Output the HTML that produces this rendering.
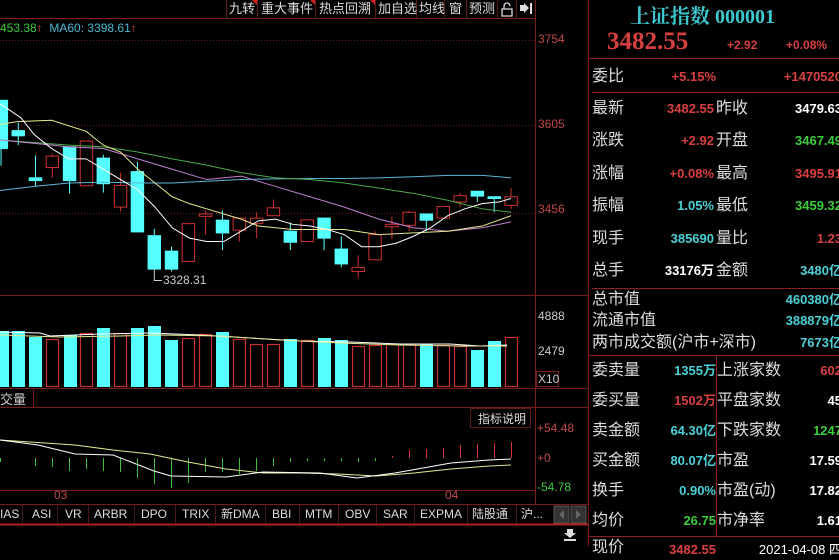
<!DOCTYPE html>
<html><head><meta charset="utf-8"><style>
*{margin:0;padding:0;box-sizing:border-box}
html,body{width:839px;height:546px}
body{background:#000;overflow:hidden;position:relative;font-family:"Liberation Sans","Noto Sans CJK SC",sans-serif;color:#ccc}
.a{position:absolute;white-space:nowrap}
.lb{font-size:16px;color:#ddd;line-height:20px}
.v{font-size:13px;font-weight:bold;line-height:20px;text-align:right}
.r{color:#d84040}.g{color:#3ccc3c}.c{color:#4cd0d8}.w{color:#fff}
.tb{font-size:13px;color:#ddd;top:1px;line-height:16px}
.tab{font-size:12px;color:#ddd;top:506px;line-height:17px}
.ax{font-size:12px;color:#c04848}
</style></head><body>
<svg class="a" style="left:0;top:0" width="839" height="546">
 <line x1="0" y1="18.5" x2="535" y2="18.5" stroke="#7a1a1a"/>
 <line x1="535.5" y1="0" x2="535.5" y2="505" stroke="#7a1a1a"/>
 <line x1="0" y1="295.5" x2="588" y2="295.5" stroke="#7a1a1a"/>
 <line x1="0" y1="388.5" x2="588" y2="388.5" stroke="#7a1a1a"/>
 <line x1="0" y1="407.5" x2="588" y2="407.5" stroke="#7a1a1a"/>
 <line x1="0" y1="490.5" x2="535" y2="490.5" stroke="#7a1a1a"/>
 <line x1="0" y1="504.5" x2="588" y2="504.5" stroke="#7a1a1a"/>
 <line x1="0" y1="524.5" x2="588" y2="524.5" stroke="#b02020" stroke-width="2"/>
 <line x1="33.5" y1="388" x2="33.5" y2="407" stroke="#7a1a1a"/>
 <line x1="588.5" y1="0" x2="588.5" y2="546" stroke="#7a1a1a"/>
 <line x1="0" y1="125.5" x2="535" y2="125.5" stroke="#6a2020" stroke-dasharray="1,2"/>
 <line x1="0" y1="213.5" x2="535" y2="213.5" stroke="#6a2020" stroke-dasharray="1,2"/>
 <line x1="0" y1="40.5" x2="535" y2="40.5" stroke="#6a2020" stroke-dasharray="1,2"/>
 <g transform="translate(0,90) scale(0.3444)" stroke-width="3">
  <g fill="#55ffff" stroke="#55ffff">
   <line x1="3" y1="30" x2="3" y2="220"/><rect x="-15" y="30" width="37" height="140"/>
   <line x1="53" y1="95" x2="53" y2="160"/><rect x="35" y="118" width="36" height="15"/>
   <line x1="103" y1="190" x2="103" y2="280"/><rect x="85" y="255" width="36" height="8"/>
   <line x1="202" y1="165" x2="202" y2="300"/><rect x="184" y="165" width="36" height="98"/>
   <line x1="300" y1="188" x2="300" y2="298"/><rect x="282" y="198" width="36" height="74"/>
   <line x1="399" y1="208" x2="399" y2="412"/><rect x="381" y="237" width="36" height="175"/>
   <line x1="448" y1="403" x2="448" y2="520"/><rect x="430" y="423" width="36" height="97"/>
   <line x1="498" y1="455" x2="498" y2="527"/><rect x="480" y="468" width="36" height="52"/>
   <line x1="646" y1="350" x2="646" y2="465"/><rect x="628" y="378" width="36" height="37"/>
   <line x1="843" y1="385" x2="843" y2="465"/><rect x="825" y="410" width="36" height="32"/>
   <line x1="941" y1="372" x2="941" y2="465"/><rect x="923" y="372" width="36" height="58"/>
   <line x1="991" y1="425" x2="991" y2="515"/><rect x="973" y="462" width="36" height="43"/>
   <line x1="1238" y1="360" x2="1238" y2="410"/><rect x="1220" y="360" width="36" height="18"/>
   <line x1="1386" y1="294" x2="1386" y2="325"/><rect x="1368" y="294" width="36" height="14"/>
   <line x1="1435" y1="310" x2="1435" y2="355"/><rect x="1417" y="310" width="36" height="5"/>
  </g>
  <g fill="#000" stroke="#c83030">
   <line x1="152" y1="185" x2="152" y2="255"/><rect x="134" y="192" width="36" height="33"/>
   <rect x="233" y="148" width="36" height="130"/>
   <line x1="350" y1="240" x2="350" y2="352"/><rect x="332" y="277" width="36" height="63"/>
   <rect x="529" y="388" width="36" height="110"/>
   <line x1="597" y1="350" x2="597" y2="420"/><rect x="579" y="360" width="36" height="7"/>
   <line x1="695" y1="372" x2="695" y2="440"/><rect x="677" y="372" width="36" height="35"/>
   <line x1="745" y1="355" x2="745" y2="430"/><rect x="727" y="372" width="36" height="16"/>
   <line x1="794" y1="318" x2="794" y2="342"/><rect x="776" y="342" width="36" height="23"/>
   <rect x="874" y="377" width="36" height="63"/>
   <line x1="1040" y1="480" x2="1040" y2="545"/><rect x="1022" y="515" width="36" height="12"/>
   <line x1="1089" y1="410" x2="1089" y2="420"/><rect x="1071" y="420" width="36" height="73"/>
   <line x1="1138" y1="368" x2="1138" y2="432"/><rect x="1120" y="390" width="36" height="7"/>
   <line x1="1188" y1="350" x2="1188" y2="410"/><rect x="1170" y="355" width="36" height="38"/>
   <rect x="1269" y="338" width="36" height="34"/>
   <line x1="1336" y1="298" x2="1336" y2="340"/><rect x="1318" y="307" width="36" height="18"/>
   <line x1="1484" y1="285" x2="1484" y2="345"/><rect x="1466" y="310" width="36" height="25"/>
  </g>
  <g fill="none" stroke-width="1">
   <polyline vector-effect="non-scaling-stroke" stroke="#5cb8d8" points="0,292 100,280 200,270 300,268 400,270 500,270 600,265 700,260 800,258 900,257 1000,257 1100,255 1200,252 1300,248 1400,248 1484,255"/>
   <polyline vector-effect="non-scaling-stroke" stroke="#4caa4c" points="0,145 200,160 300,165 400,180 500,200 600,218 700,240 800,255 900,260 1000,270 1100,285 1200,300 1300,320 1400,345 1484,355"/>
   <polyline vector-effect="non-scaling-stroke" stroke="#c080d0" points="0,145 100,155 200,165 300,170 400,200 500,230 600,260 700,250 800,280 900,310 1000,340 1100,375 1200,400 1300,410 1400,400 1484,383"/>
   <polyline vector-effect="non-scaling-stroke" stroke="#e8e890" points="0,100 50,92 150,88 250,120 300,160 350,180 400,230 450,270 500,310 550,330 600,345 650,360 700,375 750,395 800,400 850,405 1000,405 1100,420 1200,415 1300,410 1400,395 1484,365"/>
   <polyline vector-effect="non-scaling-stroke" stroke="#fff" points="0,40 60,80 100,130 150,170 200,200 250,200 300,230 350,260 400,290 450,340 500,400 550,430 600,440 650,440 700,410 750,380 800,375 850,390 900,395 950,405 1000,420 1050,455 1100,455 1150,445 1200,425 1250,400 1300,365 1350,345 1400,330 1450,325 1484,315"/>
   <polyline vector-effect="non-scaling-stroke" stroke="#ccc" points="448,520 448,553 470,553"/>
  </g>
 </g>
 <g stroke-width="1.2">
  <g fill="#55ffff">
   <rect x="0" y="331" width="9" height="56"/><rect x="12" y="331" width="13" height="56"/><rect x="29" y="337" width="13" height="50"/>
   <rect x="64" y="335" width="13" height="52"/><rect x="97" y="328" width="13" height="59"/><rect x="131" y="328" width="13" height="59"/>
   <rect x="148" y="326" width="13" height="61"/><rect x="165" y="340" width="13" height="47"/><rect x="216" y="332" width="13" height="55"/>
   <rect x="284" y="339" width="13" height="48"/><rect x="318" y="338" width="13" height="49"/><rect x="335" y="340" width="13" height="47"/>
   <rect x="420" y="344" width="13" height="43"/><rect x="471" y="350" width="13" height="37"/><rect x="488" y="341" width="13" height="46"/>
  </g>
  <g fill="none" stroke="#c83030">
   <rect x="46.5" y="339.5" width="12" height="47"/><rect x="80.5" y="333.5" width="12" height="53"/><rect x="114.5" y="333.5" width="12" height="53"/>
   <rect x="182.5" y="338.5" width="12" height="48"/><rect x="199.5" y="334.5" width="12" height="52"/><rect x="233.5" y="339.5" width="12" height="47"/>
   <rect x="250.5" y="344.5" width="12" height="42"/><rect x="267.5" y="344.5" width="12" height="42"/><rect x="301.5" y="340.5" width="12" height="46"/>
   <rect x="352.5" y="346.5" width="12" height="40"/><rect x="369.5" y="345.5" width="12" height="41"/><rect x="386.5" y="344.5" width="12" height="42"/>
   <rect x="403.5" y="344.5" width="12" height="42"/><rect x="437.5" y="345.5" width="12" height="41"/><rect x="454.5" y="346.5" width="12" height="40"/>
   <rect x="505.5" y="337.5" width="12" height="49"/>
  </g>
  <polyline fill="none" stroke="#fff" stroke-width="1" points="0,332 40,333 50,336 100,334 150,333 200,335 250,338 300,341 350,342 400,344 450,344 480,346 507,345"/>
  <polyline fill="none" stroke="#e8e890" stroke-width="1" points="0,335 60,337 120,336 160,335 220,336 280,340 340,343 400,345 460,346 507,346"/>
 </g>
 <g stroke-width="1">
  <g stroke="#3cbb3c">
   <line x1="0.5" y1="458" x2="0.5" y2="462"/><line x1="35.5" y1="458" x2="35.5" y2="466"/><line x1="52.5" y1="458" x2="52.5" y2="467"/><line x1="69.5" y1="458" x2="69.5" y2="471"/><line x1="86.5" y1="458" x2="86.5" y2="469"/><line x1="103.5" y1="458" x2="103.5" y2="471"/><line x1="120.5" y1="458" x2="120.5" y2="472"/><line x1="137.5" y1="458" x2="137.5" y2="478"/><line x1="154.5" y1="458" x2="154.5" y2="484"/><line x1="171.5" y1="458" x2="171.5" y2="488"/><line x1="188.5" y1="458" x2="188.5" y2="483"/><line x1="205.5" y1="458" x2="205.5" y2="472"/><line x1="222.5" y1="458" x2="222.5" y2="472"/><line x1="239.5" y1="458" x2="239.5" y2="474"/><line x1="256.5" y1="458" x2="256.5" y2="471"/><line x1="273.5" y1="458" x2="273.5" y2="466"/><line x1="290.5" y1="458" x2="290.5" y2="462"/><line x1="307.5" y1="458" x2="307.5" y2="461"/><line x1="324.5" y1="458" x2="324.5" y2="461"/><line x1="341.5" y1="458" x2="341.5" y2="461"/><line x1="358.5" y1="458" x2="358.5" y2="462"/><line x1="375.5" y1="458" x2="375.5" y2="461"/>
  </g>
  <g stroke="#d83030">
   <line x1="392.5" y1="458" x2="392.5" y2="456"/><line x1="409.5" y1="458" x2="409.5" y2="450"/><line x1="426.5" y1="458" x2="426.5" y2="449"/><line x1="443.5" y1="458" x2="443.5" y2="448"/><line x1="460.5" y1="458" x2="460.5" y2="445"/><line x1="477.5" y1="458" x2="477.5" y2="444"/><line x1="494.5" y1="458" x2="494.5" y2="443"/><line x1="511.5" y1="458" x2="511.5" y2="442"/>
  </g>
  <polyline fill="none" stroke="#e8e890" points="0,440 75,445 113,450 150,454 188,462 226,469 263,473 301,473 338,474 376,476 414,473 451,469 489,466 511,465"/>
  <polyline fill="none" stroke="#fff" points="0,440 38,445 75,454 113,455 154,471 171,476 226,477 263,472 320,473 357,478 395,473 451,463 489,460 511,459"/>
 </g>
 <g stroke="#4a1a1a">
  <line x1="22.5" y1="505" x2="22.5" y2="524"/><line x1="57.5" y1="505" x2="57.5" y2="524"/><line x1="88.5" y1="505" x2="88.5" y2="524"/><line x1="134.5" y1="505" x2="134.5" y2="524"/><line x1="175.5" y1="505" x2="175.5" y2="524"/><line x1="215.5" y1="505" x2="215.5" y2="524"/><line x1="265.5" y1="505" x2="265.5" y2="524"/><line x1="299.5" y1="505" x2="299.5" y2="524"/><line x1="338.5" y1="505" x2="338.5" y2="524"/><line x1="376.5" y1="505" x2="376.5" y2="524"/><line x1="414.5" y1="505" x2="414.5" y2="524"/><line x1="467.5" y1="505" x2="467.5" y2="524"/><line x1="516.5" y1="505" x2="516.5" y2="524"/>
 </g>
 <rect x="554" y="506" width="15" height="17" fill="#333" stroke="#555"/>
 <rect x="571" y="506" width="15" height="17" fill="#333" stroke="#555"/>
 <path d="M564,510 L559,514.5 L564,519Z" fill="#666"/><path d="M576,510 L581,514.5 L576,519Z" fill="#666"/>
 <path d="M567,529 h6 v4 h3 l-6,5 l-6,-5 h3z M564,539 h12 v2 h-12z" fill="#ddd"/>
 <line x1="588" y1="58.5" x2="839" y2="58.5" stroke="#8a2020"/>
 <line x1="592" y1="92.5" x2="839" y2="92.5" stroke="#8a2020"/>
 <line x1="592" y1="288.5" x2="839" y2="288.5" stroke="#8a2020"/>
 <line x1="588" y1="355.5" x2="839" y2="355.5" stroke="#8a2020"/>
 <line x1="716.5" y1="355" x2="716.5" y2="536" stroke="#8a2020"/>
 <line x1="588" y1="536.5" x2="839" y2="536.5" stroke="#8a2020"/>
 <g stroke="#5a1a1a"><line x1="226.5" y1="0" x2="226.5" y2="18"/><line x1="257.5" y1="0" x2="257.5" y2="18"/><line x1="315.5" y1="0" x2="315.5" y2="18"/><line x1="375.5" y1="0" x2="375.5" y2="18"/><line x1="416.5" y1="0" x2="416.5" y2="18"/><line x1="444.5" y1="0" x2="444.5" y2="18"/><line x1="466.5" y1="0" x2="466.5" y2="18"/><line x1="497.5" y1="0" x2="497.5" y2="18"/><line x1="516.5" y1="0" x2="516.5" y2="18"/></g>
 <path d="M252,0 h5 v5z M310,0 h5 v5z M370,0 h5 v5z" fill="#d02020"/>
 <path d="M502,9 h10 v7 h-10z M504,9 v-3 a3,3 0 0 1 6,0" fill="none" stroke="#ddd" stroke-width="1.3"/>
 <path d="M520,5 h4 v-2 l5,5 l-5,5 v-2 h-4z M530,3 h2 v11 h-2z" fill="#ddd"/>
 <rect x="470.5" y="408.5" width="60" height="19" fill="none" stroke="#5a1a1a"/>
 <rect x="536.5" y="371.5" width="22" height="15" fill="none" stroke="#7a1a1a"/>
</svg>

<div class="a tb" style="left:229px">九转</div>
<div class="a tb" style="left:261px">重大事件</div>
<div class="a tb" style="left:319px">热点回溯</div>
<div class="a tb" style="left:378px">加自选</div>
<div class="a tb" style="left:419px">均线</div>
<div class="a tb" style="left:449px">窗</div>
<div class="a tb" style="left:469px">预测</div>

<div class="a" style="left:0;top:21px;font-size:12px"><span style="color:#3ccc3c">453.38</span><span class="r">↑</span> <span style="color:#4cb8d0">&nbsp;MA60: 3398.61</span><span class="r">↑</span></div>
<div class="a ax" style="left:538px;top:32px">3754</div>
<div class="a ax" style="left:538px;top:117px">3605</div>
<div class="a ax" style="left:538px;top:202px">3456</div>
<div class="a" style="left:163px;top:273px;font-size:12px;color:#ccc">3328.31</div>
<div class="a" style="left:538px;top:309px;font-size:12px;color:#ccc">4888</div>
<div class="a" style="left:538px;top:344px;font-size:12px;color:#ccc">2479</div>
<div class="a" style="left:538px;top:372px;font-size:12px;color:#ccc">X10</div>
<div class="a" style="left:0;top:389px;font-size:13px;color:#ccc">交量</div>
<div class="a" style="left:478px;top:410px;font-size:12px;color:#ddd">指标说明</div>
<div class="a ax" style="left:537px;top:421px">+54.48</div>
<div class="a ax" style="left:537px;top:451px">+0</div>
<div class="a" style="left:537px;top:480px;font-size:12px;color:#3ccc3c">-54.78</div>
<div class="a ax" style="left:54px;top:488px">03</div>
<div class="a ax" style="left:445px;top:488px">04</div>

<div class="a tab" style="left:0">IAS</div>
<div class="a tab" style="left:32px">ASI</div>
<div class="a tab" style="left:65px">VR</div>
<div class="a tab" style="left:94px">ARBR</div>
<div class="a tab" style="left:141px">DPO</div>
<div class="a tab" style="left:182px">TRIX</div>
<div class="a tab" style="left:221px">新DMA</div>
<div class="a tab" style="left:272px">BBI</div>
<div class="a tab" style="left:305px">MTM</div>
<div class="a tab" style="left:345px">OBV</div>
<div class="a tab" style="left:383px">SAR</div>
<div class="a tab" style="left:420px">EXPMA</div>
<div class="a tab" style="left:472px">陆股通</div>
<div class="a tab" style="left:521px">沪...</div>

<div class="a" style="left:630px;top:0px;font-size:20px;color:#3cc8d0;font-family:'Liberation Serif','Noto Serif CJK SC',serif;font-weight:bold">上证指数 000001</div>
<div class="a r" style="left:607px;top:28px;font-size:25px;font-weight:bold;font-family:'Liberation Serif',serif">3482.55</div>
<div class="a r" style="left:727px;top:38px;font-size:12px;font-weight:bold">+2.92</div>
<div class="a r" style="left:786px;top:38px;font-size:12px;font-weight:bold">+0.08%</div>

<div class="a lb" style="left:592px;top:67px">委比</div>
<div class="a v r" style="left:640px;top:67px;width:76px">+5.15%</div>
<div class="a v r" style="left:720px;top:67px;width:122px">+1470520</div>

<div class="a lb" style="left:592px;top:99px">最新</div><div class="a v r" style="left:626px;top:99px;width:88px">3482.55</div>
<div class="a lb" style="left:716px;top:99px">昨收</div><div class="a v w" style="left:760px;top:99px;width:82px">3479.63</div>
<div class="a lb" style="left:592px;top:131px">涨跌</div><div class="a v r" style="left:626px;top:131px;width:88px">+2.92</div>
<div class="a lb" style="left:716px;top:131px">开盘</div><div class="a v g" style="left:760px;top:131px;width:82px">3467.49</div>
<div class="a lb" style="left:592px;top:164px">涨幅</div><div class="a v r" style="left:626px;top:164px;width:88px">+0.08%</div>
<div class="a lb" style="left:716px;top:164px">最高</div><div class="a v r" style="left:760px;top:164px;width:82px">3495.91</div>
<div class="a lb" style="left:592px;top:196px">振幅</div><div class="a v c" style="left:626px;top:196px;width:88px">1.05%</div>
<div class="a lb" style="left:716px;top:196px">最低</div><div class="a v g" style="left:760px;top:196px;width:82px">3459.32</div>
<div class="a lb" style="left:592px;top:229px">现手</div><div class="a v c" style="left:626px;top:229px;width:88px">385690</div>
<div class="a lb" style="left:716px;top:229px">量比</div><div class="a v r" style="left:760px;top:229px;width:82px">1.23</div>
<div class="a lb" style="left:592px;top:261px">总手</div><div class="a v w" style="left:626px;top:261px;width:88px">33176万</div>
<div class="a lb" style="left:716px;top:261px">金额</div><div class="a v c" style="left:760px;top:261px;width:82px">3480亿</div>

<div class="a lb" style="left:592px;top:290px">总市值</div><div class="a v c" style="left:700px;top:290px;width:142px">460380亿</div>
<div class="a lb" style="left:592px;top:311px">流通市值</div><div class="a v c" style="left:700px;top:311px;width:142px">388879亿</div>
<div class="a lb" style="left:592px;top:333px">两市成交额(沪市+深市)</div><div class="a v c" style="left:760px;top:333px;width:82px">7673亿</div>

<div class="a lb" style="left:592px;top:361px">委卖量</div><div class="a v c" style="left:640px;top:361px;width:76px">1355万</div>
<div class="a lb" style="left:717px;top:361px">上涨家数</div><div class="a v r" style="left:790px;top:361px;width:52px">602</div>
<div class="a lb" style="left:592px;top:391px">委买量</div><div class="a v r" style="left:640px;top:391px;width:76px">1502万</div>
<div class="a lb" style="left:717px;top:391px">平盘家数</div><div class="a v w" style="left:790px;top:391px;width:52px">45</div>
<div class="a lb" style="left:592px;top:421px">卖金额</div><div class="a v c" style="left:640px;top:421px;width:76px">64.30亿</div>
<div class="a lb" style="left:717px;top:421px">下跌家数</div><div class="a v g" style="left:790px;top:421px;width:52px">1247</div>
<div class="a lb" style="left:592px;top:451px">买金额</div><div class="a v c" style="left:640px;top:451px;width:76px">80.07亿</div>
<div class="a lb" style="left:717px;top:451px">市盈</div><div class="a v w" style="left:780px;top:451px;width:62px">17.59</div>
<div class="a lb" style="left:592px;top:481px">换手</div><div class="a v c" style="left:640px;top:481px;width:76px">0.90%</div>
<div class="a lb" style="left:717px;top:481px">市盈(动)</div><div class="a v w" style="left:780px;top:481px;width:62px">17.82</div>
<div class="a lb" style="left:592px;top:511px">均价</div><div class="a v g" style="left:640px;top:511px;width:76px">26.75</div>
<div class="a lb" style="left:717px;top:511px">市净率</div><div class="a v w" style="left:780px;top:511px;width:62px">1.61</div>
<div class="a lb" style="left:592px;top:538px">现价</div><div class="a v r" style="left:640px;top:540px;width:76px">3482.55</div>
<div class="a v w" style="left:740px;top:540px;width:102px;font-weight:normal">2021-04-08 四</div>
</body></html>
